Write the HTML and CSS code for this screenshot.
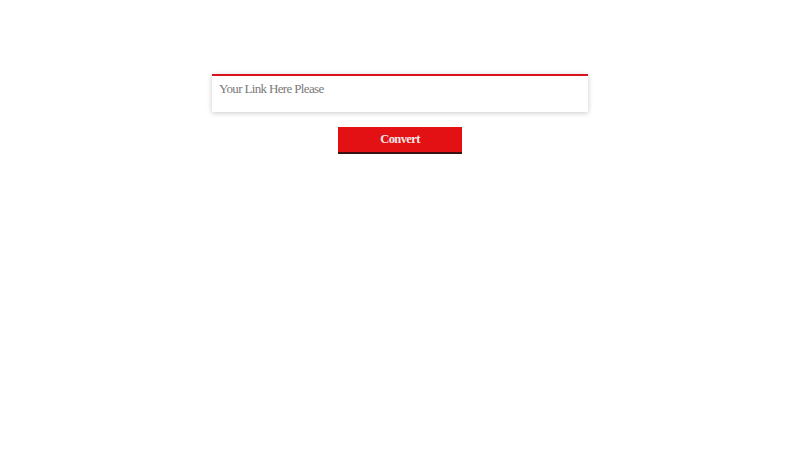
FILE: index.html
```html
<!DOCTYPE html>
<html>
<head>
<meta charset="utf-8">
<link rel="stylesheet" href="styles.css">
</head>
<body>
<div class="page">
  <form class="converter">
    <textarea class="link-input" placeholder="Your Link Here Please"></textarea>
    <button type="button" class="convert-btn">Convert</button>
  </form>
</div>
</body>
</html>
```
FILE: styles.css
```css
html, body {
  margin: 0;
  padding: 0;
  background: #ffffff;
}
.page {
  display: flex;
  justify-content: center;
  padding-top: 74px;
}
.converter {
  display: flex;
  flex-direction: column;
  align-items: center;
  gap: 15px;
  width: 376px;
}
.link-input {
  box-sizing: border-box;
  width: 376px;
  height: 38px;
  margin: 0;
  padding: 5px 7px;
  border: none;
  border-top: 2px solid #d9121b;
  box-shadow: 0 1px 5px rgba(0, 0, 0, 0.22);
  font-family: "Liberation Serif", "Times New Roman", serif;
  font-size: 13px;
  letter-spacing: -0.65px;
  color: #333;
  resize: none;
  outline: none;
  background: #fff;
}
.link-input::placeholder {
  color: #7a7a7a;
}
.convert-btn {
  box-sizing: border-box;
  width: 124px;
  height: 27px;
  margin: 0;
  padding: 0;
  border: none;
  border-bottom: 2px solid #3a1010;
  background: #e31014;
  color: #f5eaea;
  font-family: "Liberation Serif", "Times New Roman", serif;
  font-size: 12.5px;
  font-weight: bold;
  letter-spacing: -0.6px;
  cursor: pointer;
}
```
